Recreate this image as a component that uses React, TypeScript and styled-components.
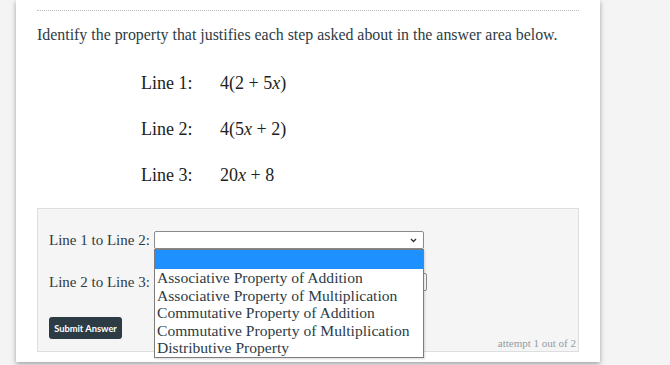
import { FC } from 'react';
import styled, { createGlobalStyle } from 'styled-components';

const GlobalStyle = createGlobalStyle`
  html, body {
    margin: 0;
    padding: 0;
    background: #f4f4f4;
  }
  body {
    font-family: 'Liberation Serif', serif;
    color: #2d3b45;
    overflow: hidden;
  }
`;

const Page = styled.div`
  height: 365px;
  padding-left: 16px;
`;

const Card = styled.div`
  width: 584px;
  height: 362px;
  box-sizing: border-box;
  background: #ffffff;
  padding: 10px 21px 11px 21px;
  box-shadow: 0 2px 5px rgba(0, 0, 0, 0.35);
  display: flex;
  flex-direction: column;
`;

const Divider = styled.div`
  border-top: 1px dotted #bdbdbd;
`;

const Question = styled.p`
  margin: 13px 0 0 0;
  font-size: 15.9px;
  line-height: 22px;
  color: #2d3b45;
`;

const MathTable = styled.div`
  margin: 14px 0 0 104px;
  display: grid;
  grid-template-columns: 79px auto;
  grid-auto-rows: 46px;
  align-items: center;
  font-family: 'Liberation Serif', serif;
  font-size: 18px;
  color: #222;
`;

const Var = styled.i`
  font-style: italic;
`;

const AnswerArea = styled.div`
  margin-top: 10px;
  background: #f5f5f5;
  border: 1px solid #dcdfe2;
  padding: 21px 2px 1px 11px;
  display: flex;
  flex-direction: column;
`;

const Row = styled.div<{ $gap: number }>`
  display: flex;
  align-items: center;
  height: 20px;
  margin-bottom: ${p => p.$gap}px;
  font-size: 15px;
  position: relative;
`;

const Label = styled.span`
  width: 105px;
  white-space: nowrap;
`;

const SelectBox = styled.div<{ $width: number }>`
  position: relative;
  width: ${p => p.$width}px;
  height: 18px;
  box-sizing: border-box;
  background: #fff;
  border: 1px solid #8a8a8a;
  border-radius: 2px;
  display: flex;
  align-items: center;
  justify-content: flex-end;
  padding-right: 6px;
`;

const OptionList = styled.div`
  position: absolute;
  left: 105px;
  top: 19px;
  width: 270px;
  box-sizing: border-box;
  background: #fff;
  border: 1px solid #7d7d7d;
  z-index: 10;
  font-family: 'Liberation Serif', serif;
  font-size: 15.6px;
  color: #2d3b45;
  box-shadow: 1px 1px 2px rgba(0, 0, 0, 0.15);
`;

const Option = styled.div<{ $active?: boolean }>`
  height: ${p => (p.$active ? 19 : 17.6)}px;
  line-height: 17.6px;
  padding-left: 2px;
  background: ${p => (p.$active ? '#1e90ff' : 'transparent')};
  white-space: nowrap;
`;

const Footer = styled.div`
  display: flex;
  justify-content: space-between;
  align-items: flex-end;
`;

const SubmitButton = styled.button`
  margin-bottom: 11px;
  height: 22px;
  width: 73px;
  padding: 0;
  border: none;
  border-radius: 3px;
  background: #2d3b45;
  color: #fff;
  font-family: Lato, 'Liberation Sans', sans-serif;
  font-size: 9.3px;
  font-weight: 700;
`;

const Attempt = styled.span`
  font-family: 'Liberation Serif', serif;
  font-size: 11px;
  line-height: 12px;
  color: #939ca3;
  padding-bottom: 1px;
`;

const Chevron: FC = () => (
  <svg width="7" height="5" viewBox="0 0 7 5">
    <path d="M1 1l2.5 2.5L6 1" fill="none" stroke="#333" strokeWidth="1.4" />
  </svg>
);

const options = [
  'Associative Property of Addition',
  'Associative Property of Multiplication',
  'Commutative Property of Addition',
  'Commutative Property of Multiplication',
  'Distributive Property',
];

export default function App() {
  return (
    <Page>
      <GlobalStyle />
      <Card>
        <Divider />
        <Question>
          Identify the property that justifies each step asked about in the answer area below.
        </Question>
        <MathTable>
          <span>Line 1:</span>
          <span>
            4(2 + 5<Var>x</Var>)
          </span>
          <span>Line 2:</span>
          <span>
            4(5<Var>x</Var> + 2)
          </span>
          <span>Line 3:</span>
          <span>
            20<Var>x</Var> + 8
          </span>
        </MathTable>
        <AnswerArea>
          <Row $gap={22}>
            <Label>Line 1 to Line 2:</Label>
            <SelectBox $width={270}>
              <Chevron />
            </SelectBox>
            <OptionList>
              <Option $active />
              {options.map(o => (
                <Option key={o}>{o}</Option>
              ))}
            </OptionList>
          </Row>
          <Row $gap={25}>
            <Label>Line 2 to Line 3:</Label>
            <SelectBox $width={273}>
              <Chevron />
            </SelectBox>
          </Row>
          <Footer>
            <SubmitButton>Submit Answer</SubmitButton>
            <Attempt>attempt 1 out of 2</Attempt>
          </Footer>
        </AnswerArea>
      </Card>
    </Page>
  );
}
